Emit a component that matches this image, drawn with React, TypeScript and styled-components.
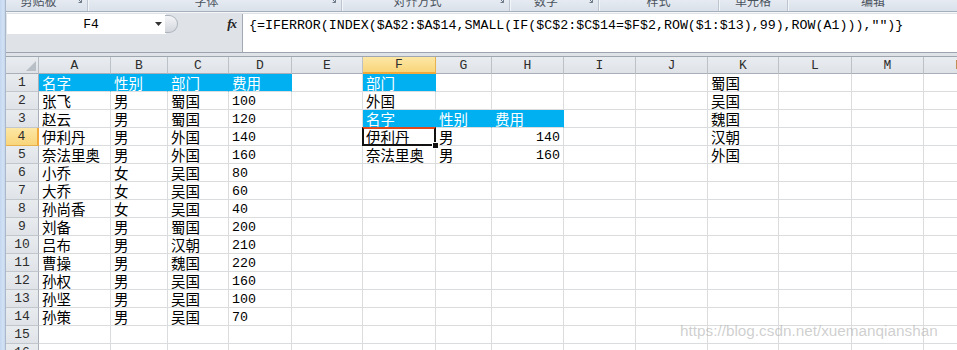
import React from "react";
import styled, { createGlobalStyle, css } from "styled-components";

// Excel 2010 window: ribbon group labels (cut), formula bar, sheet grid

const GlobalStyle = createGlobalStyle`
  html, body {
    margin: 0;
    padding: 0;
    background: #dfe3e8;
  }
  body {
    width: 957px;
    height: 350px;
    overflow: hidden;
    font-family: "Noto Sans CJK SC", sans-serif;
  }
`;

const Window = styled.div`
  position: relative;
  display: flex;
  width: 957px;
  height: 350px;
  background: #dfe3e8;
  overflow: hidden;
`;

const FrameEdge = styled.div`
  flex: none;
  width: 5px;
  background: linear-gradient(90deg, #c2d6ef 0, #d3e2f5 3px, #c4d5ea 5px);
  border-right: 1px solid #a9b8ca;
`;

const Main = styled.div`
  flex: 1;
  display: flex;
  flex-direction: column;
  min-width: 0;
`;

/* ribbon group labels */
const Ribbon = styled.div`
  display: flex;
  height: 11px;
  overflow: hidden;
  background: linear-gradient(#e6ebf2, #dae1ea);
  border-bottom: 1px solid #a6b0bc;
`;

const Group = styled.div<{ $w: number }>`
  display: flex;
  flex: none;
  width: ${(p) => p.$w}px;
  height: 11px;
  border-right: 1px solid #bcc5d0;
  box-shadow: 1px 0 0 #f3f6f9;
`;

const GroupLabel = styled.div`
  flex: 1;
  align-self: flex-end;
  padding-bottom: 4px;
  text-align: center;
  font-size: 12px;
  line-height: 12px;
  color: #4a525d;
  white-space: nowrap;
`;

const Launcher = styled.div`
  flex: none;
  width: 16px;
  display: flex;
  justify-content: center;
  margin-top: -4px;
`;

const LauncherIcon = () => (
  <svg width="8" height="8" viewBox="0 0 8 8">
    <path d="M0.5 3V0.5H3" fill="none" stroke="#8a94a1" strokeWidth="1" />
    <path d="M2 2L6.5 6.5M6.5 3.5V6.5H3.5" fill="none" stroke="#6f7a88" strokeWidth="1" />
  </svg>
);

/* formula bar */
const FormulaBar = styled.div`
  display: flex;
  height: 38px;
  border-top: 1px solid #f4f6f8;
  padding-top: 1px;
  border-bottom: 1px solid #9ba4af;
`;

const LeftPane = styled.div`
  flex: none;
  width: 236px;
  display: flex;
  flex-direction: column;
`;

const NameRow = styled.div`
  display: flex;
  align-items: center;
  height: 20px;
`;

const NameBox = styled.div`
  flex: none;
  width: 159px;
  height: 20px;
  margin-left: 1px;
  display: flex;
  align-items: center;
  background: #fff;
  box-sizing: border-box;
  padding-right: 4px;
`;

const NameText = styled.div`
  flex: 1;
  text-align: center;
  font-family: "Liberation Mono", monospace;
  font-size: 13px;
  padding-left: 20px;
  color: #000;
`;

const Knob = styled.div`
  flex: none;
  width: 13px;
  height: 18px;
  margin-left: -1px;
  box-sizing: border-box;
  border: 1px solid #aeb4bc;
  border-left: none;
  border-radius: 0 9px 9px 0;
  background: linear-gradient(#f4f5f7, #d3d7dd);
`;

const FxLabel = styled.div`
  margin-left: auto;
  margin-right: 6px;
  font-family: "Liberation Serif", serif;
  font-style: italic;
  font-weight: bold;
  font-size: 13px;
  color: #222;
  letter-spacing: -1px;
`;

const FormulaInput = styled.div`
  flex: 1;
  background: #fff;
  border-left: 1px solid #a2aab4;
  padding: 2px 0 0 6px;
  font-family: "Liberation Mono", monospace;
  font-size: 13.3px;
  line-height: 20px;
  color: #000;
  white-space: nowrap;
  overflow: hidden;
`;

const Spacer = styled.div`
  height: 3px;
  border-bottom: 1px solid #9ea6b0;
`;

/* sheet */
const Sheet = styled.div<{ $cols: string }>`
  display: grid;
  grid-template-columns: ${(p) => p.$cols};
  grid-template-rows: 17px;
  grid-auto-rows: 18px;
  overflow: hidden;
  flex: 1;
  background: #fff;
`;

const headBase = css`
  box-sizing: border-box;
  display: flex;
  align-items: center;
  justify-content: center;
  background: linear-gradient(#e9ecef, #dfe2e7);
  font-family: "Liberation Mono", monospace;
  font-size: 13px;
  color: #2d2d2d;
`;

const activeHead = css`
  background: linear-gradient(#fde7a5, #f8d57a);
`;

const Corner = styled.div`
  ${headBase};
  align-items: flex-end;
  justify-content: flex-end;
  padding: 0 2px 2px 0;
  border-right: 1px solid #b7bdc5;
  border-bottom: 1px solid #a8afb8;
`;

const ColHead = styled.div<{ $active?: boolean }>`
  ${headBase};
  border-right: 1px solid #bcc1c8;
  border-bottom: 1px solid #a8afb8;
  ${(p) =>
    p.$active &&
    css`
      ${activeHead};
      border-right-color: #e7b14e;
      border-bottom: 2px solid #f2a93b;
    `}
`;

const RowHead = styled.div<{ $active?: boolean }>`
  ${headBase};
  border-right: 1px solid #a8afb8;
  border-bottom: 1px solid #c2c7cd;
  ${(p) =>
    p.$active &&
    css`
      ${activeHead};
      border-bottom-color: #e7b14e;
      border-right: 2px solid #f2a93b;
    `}
`;

const Cell = styled.div<{ $fill?: boolean; $num?: boolean; $right?: boolean; $active?: boolean }>`
  position: ${(p) => (p.$active ? "relative" : "static")};
  box-sizing: border-box;
  padding: 1px 3px 0 3px;
  border-right: 1px solid #dadcdd;
  border-bottom: 1px solid #dadcdd;
  font-family: "Noto Sans CJK SC", sans-serif;
  font-size: 14.5px;
  line-height: 16px;
  color: #000;
  white-space: nowrap;
  text-align: ${(p) => (p.$right ? "right" : "left")};
  ${(p) =>
    p.$num &&
    css`
      font-family: "Liberation Mono", monospace;
      font-size: 13.3px;
      padding-top: 2px;
    `}
  ${(p) =>
    p.$fill &&
    css`
      background: #00b0f0;
      color: #fff;
      border-right-color: #00b0f0;
    `}
`;

const Selection = styled.div`
  position: absolute;
  top: -1px;
  left: -1px;
  right: -1px;
  bottom: -1px;
  border: 2px solid #111;
  border-top-color: #e2481c;
  z-index: 2;
  pointer-events: none;
`;

const FillHandle = styled.div`
  position: absolute;
  right: -5px;
  bottom: -5px;
  width: 5px;
  height: 5px;
  background: #111;
  border: 1px solid #fff;
`;

const Watermark = styled.div`
  position: absolute;
  left: 680px;
  top: 323px;
  font-family: "Liberation Sans", Arial, sans-serif;
  font-size: 15.3px;
  line-height: 15px;
  color: rgba(175, 175, 175, 0.6);
  white-space: nowrap;
  pointer-events: none;
`;

const CornerTriangle = () => (
  <svg width="10" height="10" viewBox="0 0 10 10">
    <polygon points="10,0 10,10 0,10" fill="#b9bfc7" />
  </svg>
);

const DropArrow = () => (
  <svg width="7" height="4" viewBox="0 0 7 4">
    <polygon points="0,0 7,0 3.5,4" fill="#333" />
  </svg>
);

type CellDef = { v: string; fill?: boolean; num?: boolean; right?: boolean; active?: boolean };

const GROUPS = [
  { label: "剪贴板", w: 81, launcher: true },
  { label: "字体", w: 253, launcher: true },
  { label: "对齐方式", w: 167, launcher: true },
  { label: "数字", w: 88, launcher: true },
  { label: "样式", w: 119 },
  { label: "单元格", w: 68 },
  { label: "编辑", w: 170 },
];

const COLS = [
  { key: "A", w: 72 },
  { key: "B", w: 57 },
  { key: "C", w: 61 },
  { key: "D", w: 63 },
  { key: "E", w: 71 },
  { key: "F", w: 73 },
  { key: "G", w: 56 },
  { key: "H", w: 72 },
  { key: "I", w: 72 },
  { key: "J", w: 72 },
  { key: "K", w: 71 },
  { key: "L", w: 73 },
  { key: "M", w: 72 },
  { key: "N", w: 72 },
];

const people = [
  ["张飞", "男", "蜀国", "100"],
  ["赵云", "男", "蜀国", "120"],
  ["伊利丹", "男", "外国", "140"],
  ["奈法里奥", "男", "外国", "160"],
  ["小乔", "女", "吴国", "80"],
  ["大乔", "女", "吴国", "60"],
  ["孙尚香", "女", "吴国", "40"],
  ["刘备", "男", "蜀国", "200"],
  ["吕布", "男", "汉朝", "210"],
  ["曹操", "男", "魏国", "220"],
  ["孙权", "男", "吴国", "160"],
  ["孙坚", "男", "吴国", "100"],
  ["孙策", "男", "吴国", "70"],
];

const kingdoms = ["蜀国", "吴国", "魏国", "汉朝", "外国"];

const FORMULA = '{=IFERROR(INDEX($A$2:$A$14,SMALL(IF($C$2:$C$14=$F$2,ROW($1:$13),99),ROW(A1))),"")}';

function buildRows() {
  const rows: Record<string, CellDef>[] = Array.from({ length: 16 }, () => ({}));
  ["名字", "性别", "部门", "费用"].forEach((v, i) => {
    rows[0]["ABCD"[i]] = { v, fill: true };
  });
  people.forEach((p, r) => {
    p.forEach((v, i) => {
      rows[r + 1]["ABCD"[i]] = { v, num: i === 3 };
    });
  });
  rows[0].F = { v: "部门", fill: true };
  rows[1].F = { v: "外国" };
  rows[2].F = { v: "名字", fill: true };
  rows[2].G = { v: "性别", fill: true };
  rows[2].H = { v: "费用", fill: true };
  rows[3].F = { v: "伊利丹", active: true };
  rows[3].G = { v: "男" };
  rows[3].H = { v: "140", num: true, right: true };
  rows[4].F = { v: "奈法里奥" };
  rows[4].G = { v: "男" };
  rows[4].H = { v: "160", num: true, right: true };
  kingdoms.forEach((v, i) => {
    rows[i].K = { v };
  });
  return rows;
}

export default function App() {
  const rows = buildRows();
  const template = "33px " + COLS.map((c) => c.w + "px").join(" ");

  return (
    <>
      <GlobalStyle />
      <Window>
        <FrameEdge />
        <Main>
          <Ribbon>
            {GROUPS.map((g) => (
              <Group key={g.label} $w={g.w}>
                <GroupLabel>{g.label}</GroupLabel>
                {g.launcher && (
                  <Launcher>
                    <LauncherIcon />
                  </Launcher>
                )}
              </Group>
            ))}
          </Ribbon>

          <FormulaBar>
            <LeftPane>
              <NameRow>
                <NameBox>
                  <NameText>F4</NameText>
                  <DropArrow />
                </NameBox>
                <Knob />
                <FxLabel>fx</FxLabel>
              </NameRow>
            </LeftPane>
            <FormulaInput>{FORMULA}</FormulaInput>
          </FormulaBar>
          <Spacer />

          <Sheet $cols={template}>
            <Corner>
              <CornerTriangle />
            </Corner>
            {COLS.map((c) => (
              <ColHead key={c.key} $active={c.key === "F"}>
                {c.key}
              </ColHead>
            ))}
            {rows.map((r, i) => (
              <React.Fragment key={i}>
                <RowHead $active={i === 3}>{i + 1}</RowHead>
                {COLS.map((c) => {
                  const cell = r[c.key];
                  return (
                    <Cell
                      key={c.key}
                      $fill={cell?.fill}
                      $num={cell?.num}
                      $right={cell?.right}
                      $active={cell?.active}
                    >
                      {cell?.v}
                      {cell?.active && (
                        <Selection>
                          <FillHandle />
                        </Selection>
                      )}
                    </Cell>
                  );
                })}
              </React.Fragment>
            ))}
          </Sheet>
        </Main>
        <Watermark>https://blog.csdn.net/xuemanqianshan</Watermark>
      </Window>
    </>
  );
}
